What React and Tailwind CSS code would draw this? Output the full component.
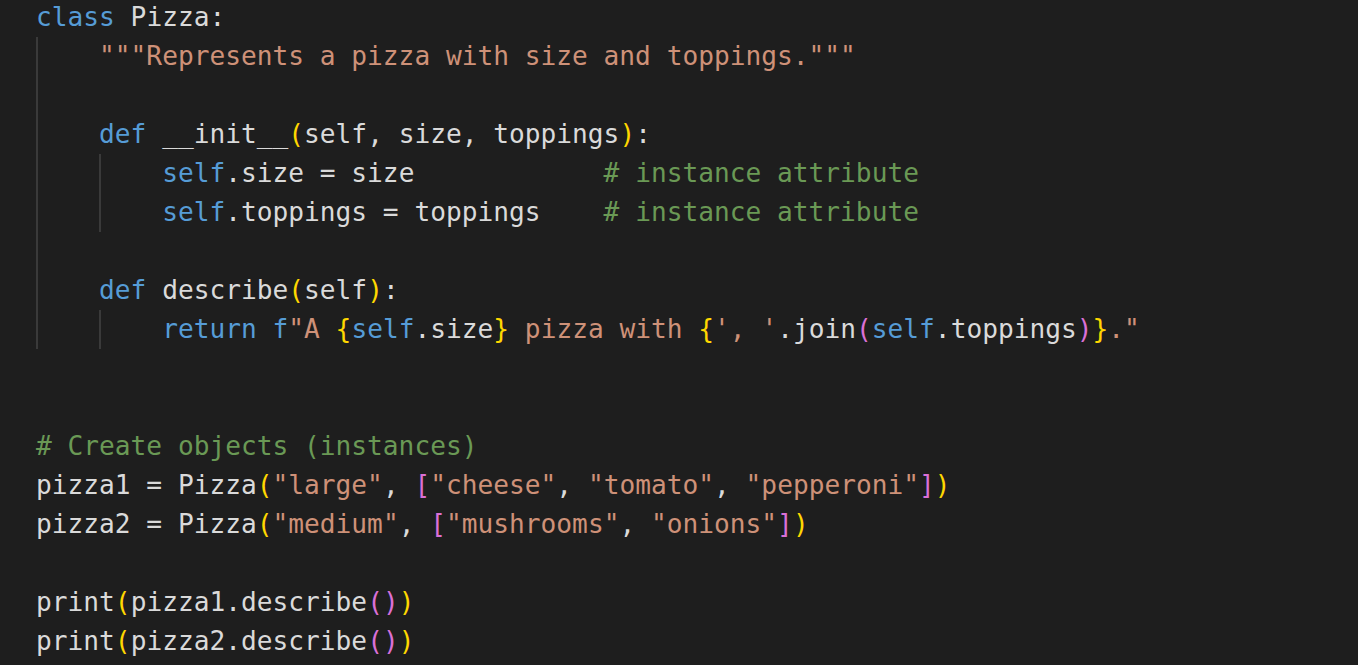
import React from "react";

const K = ({ children }) => <span className="text-[#569cd6]">{children}</span>;
const S = ({ children }) => <span className="text-[#ce9178]">{children}</span>;
const C = ({ children }) => <span className="text-[#6a9955]">{children}</span>;
const Y = ({ children }) => <span className="text-[#ffd700]">{children}</span>;
const P = ({ children }) => <span className="text-[#da70d6]">{children}</span>;

const Guide = () => (
  <span className="inline-block h-full w-[4ch] shrink-0 border-l-2 border-[#3a3a3a]" />
);
const Pad = () => <span className="inline-block h-full w-[4ch] shrink-0" />;

const Line = ({ guides = [], children }) => (
  <div className="flex h-[39px] items-center whitespace-pre">
    {guides.map((g, i) => (g ? <Guide key={i} /> : <Pad key={i} />))}
    <span>{children}</span>
  </div>
);

export default function App() {
  return (
    <div
      className="h-[665px] w-[1358px] overflow-hidden bg-[#1e1e1e] pl-[36px] text-[26.2px] leading-[39px] text-[#dadada]"
      style={{ fontFamily: '"DejaVu Sans Mono", "Liberation Mono", monospace' }}
    >
      <div className="-mt-[2.5px]">
        <Line>
          <K>class</K> Pizza:
        </Line>
        <Line guides={[1]}>
          <S>"""Represents a pizza with size and toppings."""</S>
        </Line>
        <Line guides={[1]} />
        <Line guides={[1]}>
          <K>def</K> __init__<Y>(</Y>self, size, toppings<Y>)</Y>:
        </Line>
        <Line guides={[1, 1]}>
          <K>self</K>.size = size{"            "}<C># instance attribute</C>
        </Line>
        <Line guides={[1, 1]}>
          <K>self</K>.toppings = toppings{"    "}<C># instance attribute</C>
        </Line>
        <Line guides={[1]} />
        <Line guides={[1]}>
          <K>def</K> describe<Y>(</Y>self<Y>)</Y>:
        </Line>
        <Line guides={[1, 1]}>
          <K>return</K> <K>f</K>
          <S>"A </S>
          <Y>{"{"}</Y>
          <K>self</K>.size<Y>{"}"}</Y>
          <S> pizza with </S>
          <Y>{"{"}</Y>
          <S>', '</S>.join<P>(</P>
          <K>self</K>.toppings<P>)</P>
          <Y>{"}"}</Y>
          <S>."</S>
        </Line>
        <Line />
        <Line />
        <Line>
          <C># Create objects (instances)</C>
        </Line>
        <Line>
          pizza1 = Pizza<Y>(</Y>
          <S>"large"</S>, <P>[</P>
          <S>"cheese"</S>, <S>"tomato"</S>, <S>"pepperoni"</S>
          <P>]</P>
          <Y>)</Y>
        </Line>
        <Line>
          pizza2 = Pizza<Y>(</Y>
          <S>"medium"</S>, <P>[</P>
          <S>"mushrooms"</S>, <S>"onions"</S>
          <P>]</P>
          <Y>)</Y>
        </Line>
        <Line />
        <Line>
          print<Y>(</Y>pizza1.describe<P>()</P>
          <Y>)</Y>
        </Line>
        <Line>
          print<Y>(</Y>pizza2.describe<P>()</P>
          <Y>)</Y>
        </Line>
      </div>
    </div>
  );
}
